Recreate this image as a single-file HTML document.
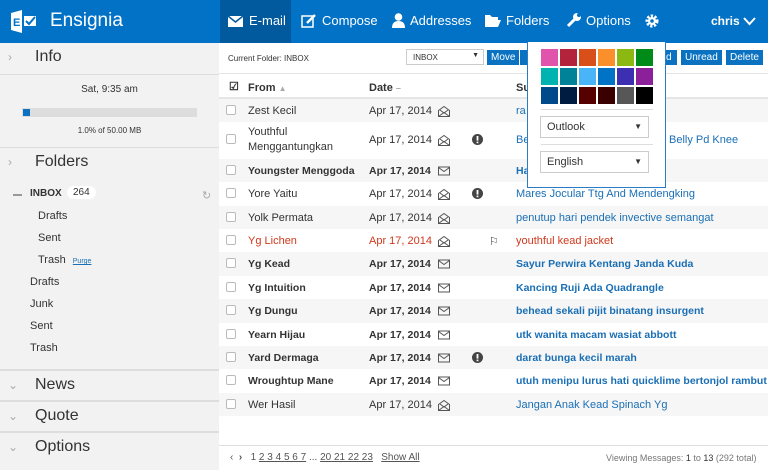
<!DOCTYPE html><html><head><style>
*{box-sizing:border-box;margin:0;padding:0}
body{width:768px;height:470px;overflow:hidden;font-family:"Liberation Sans",sans-serif;background:#fff;position:relative;color:#333}
.hdr{position:absolute;left:0;top:0;width:768px;height:43px;background:#0272c6;color:#fff}
.hdr span{position:absolute;top:13px;font-size:13px}
.abs{position:absolute}
.side{position:absolute;left:0;top:43px;width:219px;height:427px;background:#f2f2f2}
.sh{position:absolute;left:0;width:219px;height:30px;border-top:1px solid #ddd;font-size:16px;color:#333}
.sh b{position:absolute;left:35px;top:5px;font-weight:normal}
.sh i{position:absolute;left:8px;top:7px;font-style:normal;color:#aaa;font-size:12px}
.fl{position:absolute;font-size:11px;color:#333}
.row{position:absolute;left:219px;width:549px;height:23.4px;font-size:11px;white-space:nowrap}
.row.g{background:#f6f6f6}
.row span{position:absolute;top:6px}
.cb{position:absolute;left:7px;top:6px;width:10px;height:10px;border:1px solid #bbb;border-radius:2px;background:#fff}
.b{font-weight:bold}
.b span{font-size:10.5px}
.subj{color:#1a6fb5}
svg.ic{position:absolute;left:219px;top:7px}
svg.ex{position:absolute;left:253px;top:6px}
.btn{position:absolute;top:50px;height:15px;background:#0a72c0;color:#fff;font-size:10px;padding:1px 4px;line-height:13px}
.sw{position:absolute;width:17px;height:17px}
.sel{position:absolute;left:540px;width:109px;height:22px;border:1px solid #ccc;font-size:11px;padding:4px 0 0 6px;background:#fff}
.sel:after{content:"▼";position:absolute;right:6px;top:5px;font-size:8px}
</style></head><body>
<svg width="0" height="0" style="position:absolute"><defs>
<symbol id="cl" viewBox="0 0 12 10"><rect x=".5" y="1" width="11" height="8" fill="none" stroke="#555"/><path d="M.5 1.5 l5.5 4 l5.5 -4" fill="none" stroke="#555"/></symbol>
<symbol id="op" viewBox="0 0 12 11"><path d="M.5 4.5 l5.5 -4 l5.5 4 v6 h-11z" fill="none" stroke="#555"/><path d="M.5 10.5 l5.5 -4 l5.5 4 M2 4 l4 3 l4 -3" fill="none" stroke="#555"/></symbol>
<symbol id="ex" viewBox="0 0 11 11"><circle cx="5.5" cy="5.5" r="5.5" fill="#444"/><rect x="4.6" y="2" width="1.8" height="4.6" fill="#fff"/><rect x="4.6" y="7.6" width="1.8" height="1.6" fill="#fff"/></symbol>
</defs></svg>
<div class="hdr">
<div class="abs" style="left:220px;top:0;width:71px;height:43px;background:#025a9e"></div>
<svg class="abs" style="left:11px;top:10px" width="26" height="23"><path d="M0 3 L11 0 V23 L0 20Z" fill="#fff"/><text x="2" y="16" font-size="11" font-weight="bold" fill="#0272c6" font-family="Liberation Sans">E</text><rect x="13" y="6" width="12" height="10" fill="#fff"/><path d="M15 11 l3 3 l6 -7" stroke="#0272c6" stroke-width="2" fill="none"/></svg>
<span style="left:50px;top:10px;font-size:19px">Ensignia</span>
<svg class="abs" style="left:228px;top:16px" width="15" height="11"><rect width="15" height="11" fill="#fff"/><path d="M0 0 l7.5 6 l7.5 -6" stroke="#025a9e" stroke-width="1.5" fill="none"/></svg>
<span style="left:249px">E-mail</span>
<svg class="abs" style="left:301px;top:14px" width="15" height="14"><rect x="1" y="2" width="11" height="11" fill="none" stroke="#fff" stroke-width="1.5"/><path d="M6 9 l8 -8" stroke="#fff" stroke-width="2.5"/></svg>
<span style="left:322px">Compose</span>
<svg class="abs" style="left:392px;top:13px" width="13" height="15"><circle cx="6.5" cy="4" r="3.8" fill="#fff"/><path d="M0 15 q0 -7 6.5 -7 q6.5 0 6.5 7z" fill="#fff"/></svg>
<span style="left:410px">Addresses</span>
<svg class="abs" style="left:485px;top:15px" width="16" height="12"><path d="M0 0 h5 l2 2 h6 v3 h-10 l-3 7z M3 5 h13 l-3 7 h-13z" fill="#fff"/></svg>
<span style="left:506px">Folders</span>
<svg class="abs" style="left:566px;top:13px" width="15" height="15"><path d="M2 13 l7 -7" stroke="#fff" stroke-width="3"/><circle cx="11" cy="4" r="4" fill="#fff"/><circle cx="13" cy="2" r="2" fill="#0272c6"/></svg>
<span style="left:586px">Options</span>
<svg class="abs" style="left:645px;top:14px" width="14" height="14"><circle cx="7" cy="7" r="5" fill="none" stroke="#fff" stroke-width="3" stroke-dasharray="2.2 1.5"/><circle cx="7" cy="7" r="4" fill="#fff"/><circle cx="7" cy="7" r="1.8" fill="#0272c6"/></svg>
<span style="left:711px;font-weight:bold;font-size:12px;top:14px">chris</span>
<svg class="abs" style="left:743px;top:17px" width="13" height="9"><path d="M1 1 l5.5 6 l5.5 -6" stroke="#fff" stroke-width="2" fill="none"/></svg>
</div>

<div class="side">
<div class="sh" style="top:0;border-top:none"><i>›</i><b>Info</b></div>
<div class="abs" style="top:31px;left:0;width:219px;height:1px;background:#ddd"></div>
<div class="fl" style="top:41px;left:0;width:219px;text-align:center;font-size:10px">Sat, 9:35 am</div>
<div class="abs" style="left:22px;top:65px;width:175px;height:9px;background:#ddd"><div style="width:7px;height:7px;margin:1px;background:#0a72c0"></div></div>
<div class="fl" style="top:83px;left:0;width:219px;text-align:center;font-size:8px">1.0% of 50.00 MB</div>
<div class="sh" style="top:104px"><i>›</i><b>Folders</b></div>
<div class="abs" style="left:13px;top:151px;width:9px;height:2px;background:#999"></div>
<div class="fl b" style="left:30px;top:145px;font-size:10px">INBOX</div>
<div class="fl" style="left:67px;top:143px;background:#fff;border-radius:8px;padding:1px 6px;font-size:10px">264</div>
<div class="fl" style="left:202px;top:146px;color:#aaa">↻</div>
<div class="fl" style="left:38px;top:167px">Drafts</div>
<div class="fl" style="left:38px;top:189px">Sent</div>
<div class="fl" style="left:38px;top:211px">Trash <u style="font-size:7px;color:#1a6fb5;margin-left:4px">Purge</u></div>
<div class="fl" style="left:30px;top:233px">Drafts</div>
<div class="fl" style="left:30px;top:255px">Junk</div>
<div class="fl" style="left:30px;top:277px">Sent</div>
<div class="fl" style="left:30px;top:299px">Trash</div>
<div class="sh" style="top:326px;border-top:2px solid #ddd"><i>⌄</i><b>News</b></div>
<div class="sh" style="top:357px;border-top:2px solid #ddd"><i>⌄</i><b>Quote</b></div>
<div class="sh" style="top:388px;border-top:2px solid #ddd"><i>⌄</i><b>Options</b></div>
</div>

<div class="abs" style="left:228px;top:54px;font-size:8px">Current Folder: INBOX</div>
<div class="abs" style="left:406px;top:49px;width:78px;height:16px;border:1px solid #ccc;font-size:8px;padding:3px 0 0 6px">INBOX<span style="position:absolute;right:4px;top:2px;font-size:7px">▼</span></div>
<div class="btn" style="left:487px">Move</div>
<div class="btn" style="left:520px;width:10px;padding:0"></div>
<div class="btn" style="left:662px;width:15px">d</div>
<div class="btn" style="left:681px">Unread</div>
<div class="btn" style="left:726px">Delete</div>
<div class="abs" style="left:219px;top:73px;width:549px;height:1px;background:#e5e5e5"></div>

<div class="row" style="top:76px;border-bottom:2px solid #e5e5e5;font-weight:bold">
<span style="left:10px;top:4px">☑</span><span style="left:29px">From <small style="color:#aaa;font-size:8px">▲</small></span><span style="left:150px">Date <small style="color:#aaa">–</small></span><span style="left:297px">Su</span></div>

<div class="row g" style="top:99px"><div class="cb"></div><span style="left:29px">Zest Kecil</span><span style="left:150px">Apr 17, 2014</span><svg class="ic" width="12" height="11"><use href="#op"/></svg><span class="subj" style="left:297px">ra</span></div>
<div class="row" style="top:122.4px;height:36px"><div class="cb" style="top:12px"></div><span style="left:29px;line-height:15px;top:3px">Youthful<br>Menggantungkan</span><span style="left:150px;top:12px">Apr 17, 2014</span><svg class="ic" style="top:13px" width="12" height="11"><use href="#op"/></svg><svg class="ex" style="top:12px" width="11" height="11"><use href="#ex"/></svg><span class="subj" style="left:297px;top:12px">Be</span><span class="subj" style="left:450px;top:12px">Belly Pd Knee</span></div>
<div class="row g b" style="top:158.8px"><div class="cb"></div><span style="left:29px">Youngster Menggoda</span><span style="left:150px">Apr 17, 2014</span><svg class="ic" width="12" height="10"><use href="#cl"/></svg><span class="subj" style="left:297px">Ha</span></div>
<div class="row" style="top:182.2px"><div class="cb"></div><span style="left:29px">Yore Yaitu</span><span style="left:150px">Apr 17, 2014</span><svg class="ic" width="12" height="11"><use href="#op"/></svg><svg class="ex" width="11" height="11"><use href="#ex"/></svg><span class="subj" style="left:297px">Mares Jocular Ttg And Mendengking</span></div>
<div class="row g" style="top:205.6px"><div class="cb"></div><span style="left:29px">Yolk Permata</span><span style="left:150px">Apr 17, 2014</span><svg class="ic" width="12" height="11"><use href="#op"/></svg><span class="subj" style="left:297px">penutup hari pendek invective semangat</span></div>
<div class="row" style="top:229px;color:#d0381c"><div class="cb"></div><span style="left:29px">Yg Lichen</span><span style="left:150px">Apr 17, 2014</span><svg class="ic" width="12" height="11"><use href="#op"/></svg><span style="left:270px;color:#333">⚐</span><span style="left:297px">youthful kead jacket</span></div>
<div class="row g b" style="top:252.4px"><div class="cb"></div><span style="left:29px">Yg Kead</span><span style="left:150px">Apr 17, 2014</span><svg class="ic" width="12" height="10"><use href="#cl"/></svg><span class="subj" style="left:297px">Sayur Perwira Kentang Janda Kuda</span></div>
<div class="row b" style="top:275.8px"><div class="cb"></div><span style="left:29px">Yg Intuition</span><span style="left:150px">Apr 17, 2014</span><svg class="ic" width="12" height="10"><use href="#cl"/></svg><span class="subj" style="left:297px">Kancing Ruji Ada Quadrangle</span></div>
<div class="row g b" style="top:299.2px"><div class="cb"></div><span style="left:29px">Yg Dungu</span><span style="left:150px">Apr 17, 2014</span><svg class="ic" width="12" height="10"><use href="#cl"/></svg><span class="subj" style="left:297px">behead sekali pijit binatang insurgent</span></div>
<div class="row b" style="top:322.6px"><div class="cb"></div><span style="left:29px">Yearn Hijau</span><span style="left:150px">Apr 17, 2014</span><svg class="ic" width="12" height="10"><use href="#cl"/></svg><span class="subj" style="left:297px">utk wanita macam wasiat abbott</span></div>
<div class="row g b" style="top:346px"><div class="cb"></div><span style="left:29px">Yard Dermaga</span><span style="left:150px">Apr 17, 2014</span><svg class="ic" width="12" height="10"><use href="#cl"/></svg><svg class="ex" width="11" height="11"><use href="#ex"/></svg><span class="subj" style="left:297px">darat bunga kecil marah</span></div>
<div class="row b" style="top:369.4px"><div class="cb"></div><span style="left:29px">Wroughtup Mane</span><span style="left:150px">Apr 17, 2014</span><svg class="ic" width="12" height="10"><use href="#cl"/></svg><span class="subj" style="left:297px">utuh menipu lurus hati quicklime bertonjol rambut</span></div>
<div class="row g" style="top:392.8px"><div class="cb"></div><span style="left:29px">Wer Hasil</span><span style="left:150px">Apr 17, 2014</span><svg class="ic" width="12" height="11"><use href="#op"/></svg><span class="subj" style="left:297px">Jangan Anak Kead Spinach Yg</span></div>

<div class="abs" style="left:219px;top:445px;width:549px;height:1px;background:#e0e0e0"></div>
<div class="abs" style="left:230px;top:452px;font-size:10px;color:#555">‹ &nbsp;<b>›</b> &nbsp; 1 <u>2 3 4 5 6 7</u> ... <u>20 21 22 23</u> &nbsp; <u>Show All</u></div>
<div class="abs" style="left:606px;top:453px;font-size:9px;color:#777">Viewing Messages: <span style="color:#333">1</span> to <span style="color:#333">13</span> (292 total)</div>

<div class="abs" style="left:527px;top:42px;width:139px;height:146px;background:#fff;border:1px solid #2a7cc7;border-top:none">
<div class="abs" style="left:13px;top:67px;width:112px;height:1px;background:#ddd"></div>
<div class="abs" style="left:13px;top:102px;width:112px;height:1px;background:#ddd"></div>
</div>
<div class="sw" style="left:541px;top:49px;background:#e054ac"></div><div class="sw" style="left:560px;top:49px;background:#b3243c"></div><div class="sw" style="left:579px;top:49px;background:#d94f1a"></div><div class="sw" style="left:598px;top:49px;background:#fb8f2c"></div><div class="sw" style="left:617px;top:49px;background:#8bb811"></div><div class="sw" style="left:636px;top:49px;background:#008a17"></div>
<div class="sw" style="left:541px;top:68px;background:#00b2b0"></div><div class="sw" style="left:560px;top:68px;background:#008299"></div><div class="sw" style="left:579px;top:68px;background:#4ab4f9"></div><div class="sw" style="left:598px;top:68px;background:#0073c6"></div><div class="sw" style="left:617px;top:68px;background:#3c2fb1"></div><div class="sw" style="left:636px;top:68px;background:#8c1f9a"></div>
<div class="sw" style="left:541px;top:87px;background:#004a8c"></div><div class="sw" style="left:560px;top:87px;background:#001c40"></div><div class="sw" style="left:579px;top:87px;background:#560000"></div><div class="sw" style="left:598px;top:87px;background:#3a0000"></div><div class="sw" style="left:617px;top:87px;background:#575757"></div><div class="sw" style="left:636px;top:87px;background:#000"></div>
<div class="sel" style="top:116px">Outlook</div>
<div class="sel" style="top:151px">English</div>
</body></html>
